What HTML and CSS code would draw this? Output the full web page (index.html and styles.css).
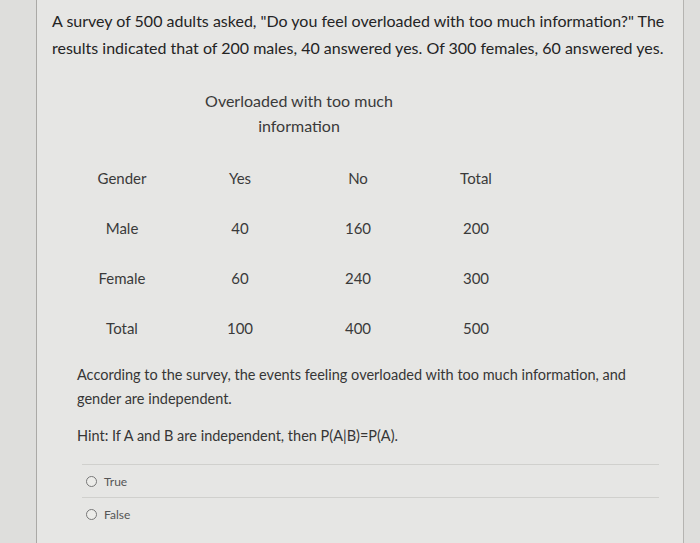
FILE: index.html
```html
<!DOCTYPE html>
<html>
<head>
<meta charset="utf-8">
<link rel="stylesheet" href="styles.css">
</head>
<body>
<div class="panel">
  <p class="question">A survey of 500 adults asked, "Do you feel overloaded with too much information?" The results indicated that of 200 males, 40 answered yes. Of 300 females, 60 answered yes.</p>
  <div class="table">
    <div class="cell"></div>
    <div class="cell span2 top">Overloaded with too much information</div>
    <div class="cell"></div>
    <div class="cell">Gender</div><div class="cell">Yes</div><div class="cell">No</div><div class="cell">Total</div>
    <div class="cell">Male</div><div class="cell">40</div><div class="cell">160</div><div class="cell">200</div>
    <div class="cell">Female</div><div class="cell">60</div><div class="cell">240</div><div class="cell">300</div>
    <div class="cell">Total</div><div class="cell">100</div><div class="cell">400</div><div class="cell">500</div>
  </div>
  <p class="statement">According to the survey, the events feeling overloaded with too much information, and gender are independent.</p>
  <p class="hint">Hint: If A and B are independent, then P(A|B)=P(A).</p>
  <div class="options">
    <label class="option"><span class="radio"></span>True</label>
    <label class="option"><span class="radio"></span>False</label>
  </div>
</div>
</body>
</html>
```
FILE: styles.css
```css
html, body {
  margin: 0;
  padding: 0;
  height: 100%;
}
body {
  background: #dededc;
  font-family: Lato, "Liberation Sans", sans-serif;
  color: #333;
  overflow: hidden;
}
.panel {
  margin: 0 16px 0 36px;
  height: 100%;
  background: #e6e6e4;
  border-left: 1px solid #aaa9a6;
  border-right: 1px solid #b5b4b1;
  padding: 7px 4px 0 15px;
  box-sizing: border-box;
}
.question {
  margin: 0;
  font-size: 16px;
  line-height: 27px;
  color: #242424;
  width: 625px;
}
.table {
  display: grid;
  grid-template-columns: repeat(4, 118px);
  grid-template-rows: 65px;
  grid-auto-rows: 50px;
  margin: 27px 0 0 11px;
  font-size: 15px;
  color: #3a3a3a;
}
.cell {
  display: flex;
  align-items: center;
  justify-content: center;
  text-align: center;
}
.top {
  font-size: 16px;
  line-height: 25px;
  align-self: start;
  padding: 0 18px;
}
.span2 {
  grid-column: span 2;
}
.statement {
  margin: 10px 0 0 25px;
  font-size: 14.5px;
  line-height: 24px;
  color: #363636;
  width: 580px;
}
.hint {
  margin: 13px 0 0 25px;
  font-size: 14.5px;
  line-height: 24px;
  color: #363636;
}
.options {
  margin: 16px 20px 0 30px;
}
.option {
  display: flex;
  align-items: center;
  height: 33px;
  border-top: 1px solid #d0d0cd;
  font-size: 12px;
  color: #555;
  padding-left: 4px;
  box-sizing: border-box;
}
.radio {
  width: 9px;
  height: 9px;
  border: 1px solid #777;
  border-radius: 50%;
  margin-right: 7px;
  background: #ecece9;
}
```
